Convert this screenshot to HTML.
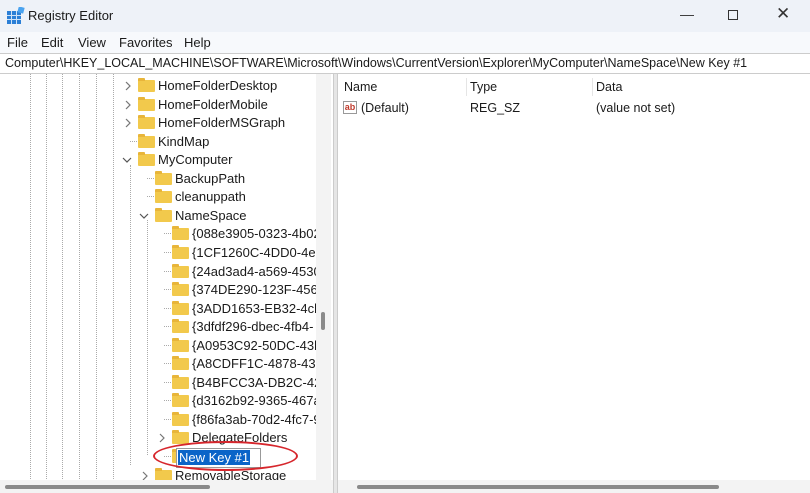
<!DOCTYPE html>
<html><head><meta charset="utf-8"><style>
*{margin:0;padding:0;box-sizing:border-box}
body{width:810px;height:493px;overflow:hidden;background:#fff;font-family:"Liberation Sans",sans-serif;font-size:12.5px;color:#1a1a1a;position:relative}
.abs{position:absolute;white-space:nowrap}
.f{position:absolute;width:17px;height:12px;background:#f2c94c;border-radius:1px}
.f:before{content:"";position:absolute;left:0;top:-2px;width:7px;height:3px;background:#e8b53a;border-radius:1px 1px 0 0}
.vl{position:absolute;border-left:1px dotted #aaa;top:0;height:405px}
#clip{position:absolute;left:0;top:74px;width:316px;height:406px;overflow:hidden}
</style></head><body>
<div class="abs" style="left:0;top:0;width:810px;height:32px;background:#eef2f8"></div>
<svg class="abs" style="left:7px;top:7px" width="18" height="18"><rect x="0" y="4" width="14" height="13" fill="#2b7fd6"/><g stroke="#cfe3f7" stroke-width="1"><line x1="0" y1="8.5" x2="14" y2="8.5"/><line x1="0" y1="12.5" x2="14" y2="12.5"/><line x1="4.5" y1="4" x2="4.5" y2="17"/><line x1="9.5" y1="4" x2="9.5" y2="17"/></g><rect x="11" y="0" width="6" height="6" fill="#4aa3ef" transform="rotate(15 14 3)"/></svg>
<div class="abs" style="left:28px;top:8px;font-size:13px">Registry Editor</div>
<div class="abs" style="left:680px;top:6px;font-size:14px;color:#333">—</div>
<div class="abs" style="left:728px;top:10px;width:10px;height:10px;border:1px solid #333"></div>
<div class="abs" style="left:776px;top:4px;font-size:17px;color:#333">✕</div>
<div class="abs" style="left:0;top:32px;width:810px;height:21px;background:#f7f9fc"></div>
<div class="abs" style="left:7px;top:35px;font-size:13px">File</div>
<div class="abs" style="left:41px;top:35px;font-size:13px">Edit</div>
<div class="abs" style="left:78px;top:35px;font-size:13px">View</div>
<div class="abs" style="left:119px;top:35px;font-size:13px">Favorites</div>
<div class="abs" style="left:184px;top:35px;font-size:13px">Help</div>
<div class="abs" style="left:0;top:53px;width:810px;height:21px;border-top:1px solid #ccc;border-bottom:1px solid #ccc;background:#fff"></div>
<div class="abs" style="left:5px;top:56px;font-size:12.5px">Computer\HKEY_LOCAL_MACHINE\SOFTWARE\Microsoft\Windows\CurrentVersion\Explorer\MyComputer\NameSpace\New Key #1</div>
<div id="clip">
<div class="vl" style="left:30px"></div><div class="vl" style="left:46px"></div><div class="vl" style="left:62px"></div><div class="vl" style="left:79px"></div><div class="vl" style="left:96px"></div><div class="vl" style="left:113px"></div>
<div class="abs" style="left:130px;top:91px;height:300px;border-left:1px dotted #aaa"></div>
<div class="abs" style="left:147px;top:146px;height:235px;border-left:1px dotted #aaa"></div>
<div id="tree"></div>
</div>
<div class="abs" style="left:316px;top:74px;width:15px;height:406px;background:#f3f3f3"></div>
<div class="abs" style="left:321px;top:312px;width:4px;height:18px;background:#8a8a8a;border-radius:2px"></div>
<div class="abs" style="left:333px;top:74px;width:5px;height:419px;background:#e6e6e6;border-left:1px solid #ccc;border-right:1px solid #ccc"></div>
<div class="abs" style="left:0;top:480px;width:333px;height:13px;background:#f3f3f3"></div>
<div class="abs" style="left:5px;top:485px;width:205px;height:4px;background:#8a8a8a;border-radius:2px"></div>
<div class="abs" style="left:338px;top:480px;width:472px;height:13px;background:#f3f3f3"></div>
<div class="abs" style="left:357px;top:485px;width:362px;height:4px;background:#8a8a8a;border-radius:2px"></div>
<div id="ov"></div>
<div class="abs" style="left:344px;top:80px">Name</div>
<div class="abs" style="left:470px;top:80px">Type</div>
<div class="abs" style="left:596px;top:80px">Data</div>
<div class="abs" style="left:466px;top:78px;height:18px;border-left:1px solid #e5e5e5"></div>
<div class="abs" style="left:592px;top:78px;height:18px;border-left:1px solid #e5e5e5"></div>
<div class="abs" style="left:343px;top:101px;width:14px;height:13px;border:1px solid #999;background:#fff;font-size:9px;color:#c0392b;font-weight:bold;line-height:11px;text-align:center">ab</div>
<div class="abs" style="left:361px;top:101px">(Default)</div>
<div class="abs" style="left:470px;top:101px">REG_SZ</div>
<div class="abs" style="left:596px;top:101px">(value not set)</div>
<script>
var rows=[["HomeFolderDesktop",1,'>'],["HomeFolderMobile",1,'>'],["HomeFolderMSGraph",1,'>'],["KindMap",1,''],["MyComputer",1,'v'],["BackupPath",2,''],["cleanuppath",2,''],["NameSpace",2,'v'],["{088e3905-0323-4b02",3,''],["{1CF1260C-4DD0-4eb",3,''],["{24ad3ad4-a569-4530",3,''],["{374DE290-123F-4565",3,''],["{3ADD1653-EB32-4cb",3,''],["{3dfdf296-dbec-4fb4-",3,''],["{A0953C92-50DC-43b",3,''],["{A8CDFF1C-4878-43be",3,''],["{B4BFCC3A-DB2C-424",3,''],["{d3162b92-9365-467a",3,''],["{f86fa3ab-70d2-4fc7-9",3,''],["DelegateFolders",3,'>'],["NEW",3,''],["RemovableStorage",2,'>']];
var h='',o='';rows.forEach(function(r,i){var y=4+i*18.55;var fx=138+(r[1]-1)*17;
if(r[2]=='>')h+='<svg class="abs" style="left:'+(fx-14)+'px;top:'+(y+3)+'px" width="8" height="10"><path d="M2 1 L6 5 L2 9" fill="none" stroke="#777" stroke-width="1.2"/></svg>';
if(r[2]=='v')h+='<svg class="abs" style="left:'+(fx-16)+'px;top:'+(y+4)+'px" width="10" height="8"><path d="M1 2 L5 6 L9 2" fill="none" stroke="#555" stroke-width="1.2"/></svg>';
if(r[2]=='')h+='<div class="abs" style="left:'+(fx-8)+'px;top:'+(y+7)+'px;width:7px;border-top:1px dotted #aaa"></div>';
h+='<div class="f" style="left:'+fx+'px;top:'+(y+2)+'px"></div>';
if(r[0]=='NEW'){var Y=y+74;o+='<div class="abs" style="left:'+(fx+4)+'px;top:'+(Y-1)+'px;width:85px;height:20px;border:1px solid #999;background:#fff"></div><div class="abs" style="left:'+(fx+6)+'px;top:'+(Y+1)+'px;background:#0a64c8;color:#fff;padding:0 1px;font-size:13px">New Key #1</div><div class="abs" style="left:'+(fx-19)+'px;top:'+(Y-8)+'px;width:145px;height:30px;border:2.5px solid #d6262c;border-radius:50%"></div>';}
else h+='<div class="abs" style="left:'+(fx+20)+'px;top:'+y+'px;font-size:13px">'+r[0]+'</div>';});
document.getElementById('tree').innerHTML=h;document.getElementById('ov').innerHTML=o;
</script>
</body></html>
